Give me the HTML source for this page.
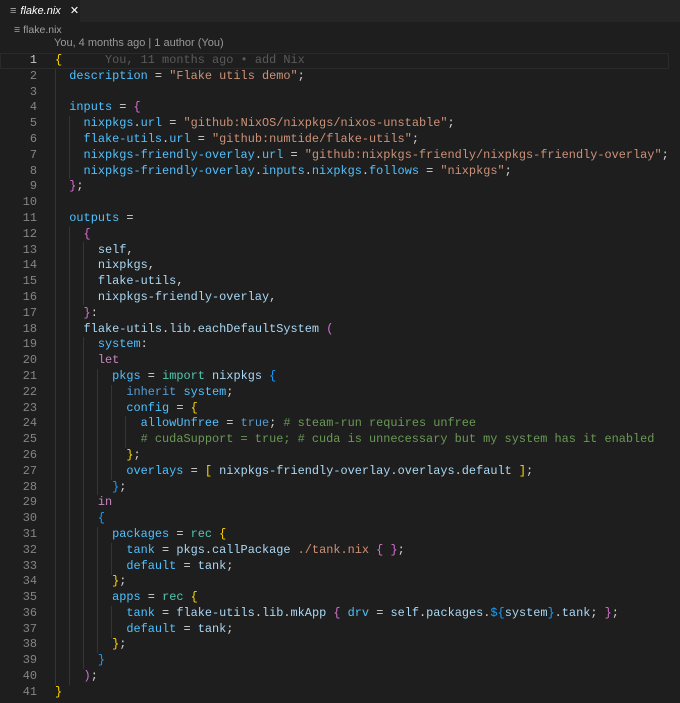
<!DOCTYPE html>
<html><head><meta charset="utf-8"><style>
body{margin:0;width:680px;height:703px;background:#1e1e1e;overflow:hidden;font-family:"Liberation Sans",sans-serif;position:relative}
.tabbar{position:absolute;left:0;top:0;width:680px;height:22px;background:#252526}
.tab{position:absolute;left:0;top:0;width:80px;height:22px;background:#1e1e1e;color:#fff;font-size:11px;font-style:italic;line-height:22px}
.bc{position:absolute;left:14px;top:23px;color:#a0a0a0;font-size:10.5px;line-height:14px}
.lens{position:absolute;left:54px;top:37px;color:#999;font-size:11px;line-height:13px}
.code{position:absolute;left:0;top:53px;font-family:"Liberation Mono",monospace;font-size:11.9px}
.l{height:15.8px;line-height:15.8px;white-space:pre;position:relative}
.n{display:inline-block;width:37px;text-align:right;color:#858585;margin-right:18px}
.cur .n{color:#c6c6c6}
.cur{outline:1px solid #2a2a2a;outline-offset:-1px}
.a{color:#4fc1ff}.v{color:#aad8f5}.s{color:#ce9178}.k{color:#4ec9b0}.t{color:#569cd6}.c{color:#6a9955}.p{color:#d4d4d4}
.b1{color:#ffd700}.b2{color:#da70d6}.b3{color:#179fff}.g{color:#5a5a5a}.kw{color:#c586c0}
.ig{position:absolute;width:1px;background:#353535}
</style></head><body>
<div class="tabbar"><div class="tab"><span style="color:#aaa;font-style:normal;margin:0 4px 0 10px">≡</span>flake.nix <span style="font-style:normal;margin-left:6px">✕</span></div></div>
<div class="bc"><span style="margin-right:3px">≡</span>flake.nix</div>
<div class="lens">You, 4 months ago | 1 author (You)</div>
<div class="ig" style="left:55px;top:69px;height:616px"></div>
<div class="ig" style="left:69px;top:116px;height:63px"></div>
<div class="ig" style="left:69px;top:227px;height:458px"></div>
<div class="ig" style="left:83px;top:242px;height:63px"></div>
<div class="ig" style="left:83px;top:337px;height:332px"></div>
<div class="ig" style="left:97px;top:369px;height:126px"></div>
<div class="ig" style="left:97px;top:527px;height:126px"></div>
<div class="ig" style="left:111px;top:385px;height:95px"></div>
<div class="ig" style="left:111px;top:543px;height:32px"></div>
<div class="ig" style="left:111px;top:606px;height:32px"></div>
<div class="ig" style="left:125px;top:416px;height:32px"></div>
<div class="code p">
<div class="l cur"><span class="n">1</span><span class="b1">{</span>      <span class="g">You, 11 months ago • add Nix</span></div>
<div class="l"><span class="n">2</span>  <span class="a">description</span> = <span class="s">"Flake utils demo"</span>;</div>
<div class="l"><span class="n">3</span></div>
<div class="l"><span class="n">4</span>  <span class="a">inputs</span> = <span class="b2">{</span></div>
<div class="l"><span class="n">5</span>    <span class="a">nixpkgs</span>.<span class="a">url</span> = <span class="s">"github:NixOS/nixpkgs/nixos-unstable"</span>;</div>
<div class="l"><span class="n">6</span>    <span class="a">flake-utils</span>.<span class="a">url</span> = <span class="s">"github:numtide/flake-utils"</span>;</div>
<div class="l"><span class="n">7</span>    <span class="a">nixpkgs-friendly-overlay</span>.<span class="a">url</span> = <span class="s">"github:nixpkgs-friendly/nixpkgs-friendly-overlay"</span>;</div>
<div class="l"><span class="n">8</span>    <span class="a">nixpkgs-friendly-overlay</span>.<span class="a">inputs</span>.<span class="a">nixpkgs</span>.<span class="a">follows</span> = <span class="s">"nixpkgs"</span>;</div>
<div class="l"><span class="n">9</span>  <span class="b2">}</span>;</div>
<div class="l"><span class="n">10</span></div>
<div class="l"><span class="n">11</span>  <span class="a">outputs</span> =</div>
<div class="l"><span class="n">12</span>    <span class="b2">{</span></div>
<div class="l"><span class="n">13</span>      <span class="v">self</span>,</div>
<div class="l"><span class="n">14</span>      <span class="v">nixpkgs</span>,</div>
<div class="l"><span class="n">15</span>      <span class="v">flake-utils</span>,</div>
<div class="l"><span class="n">16</span>      <span class="v">nixpkgs-friendly-overlay</span>,</div>
<div class="l"><span class="n">17</span>    <span class="b2">}</span>:</div>
<div class="l"><span class="n">18</span>    <span class="v">flake-utils</span>.<span class="v">lib</span>.<span class="v">eachDefaultSystem</span> <span class="b2">(</span></div>
<div class="l"><span class="n">19</span>      <span class="a">system</span>:</div>
<div class="l"><span class="n">20</span>      <span class="kw">let</span></div>
<div class="l"><span class="n">21</span>        <span class="a">pkgs</span> = <span class="k">import</span> <span class="v">nixpkgs</span> <span class="b3">{</span></div>
<div class="l"><span class="n">22</span>          <span class="t">inherit</span> <span class="a">system</span>;</div>
<div class="l"><span class="n">23</span>          <span class="a">config</span> = <span class="b1">{</span></div>
<div class="l"><span class="n">24</span>            <span class="a">allowUnfree</span> = <span class="t">true</span>; <span class="c"># steam-run requires unfree</span></div>
<div class="l"><span class="n">25</span>            <span class="c"># cudaSupport = true; # cuda is unnecessary but my system has it enabled</span></div>
<div class="l"><span class="n">26</span>          <span class="b1">}</span>;</div>
<div class="l"><span class="n">27</span>          <span class="a">overlays</span> = <span class="b1">[</span> <span class="v">nixpkgs-friendly-overlay</span>.<span class="v">overlays</span>.<span class="v">default</span> <span class="b1">]</span>;</div>
<div class="l"><span class="n">28</span>        <span class="b3">}</span>;</div>
<div class="l"><span class="n">29</span>      <span class="kw">in</span></div>
<div class="l"><span class="n">30</span>      <span class="b3">{</span></div>
<div class="l"><span class="n">31</span>        <span class="a">packages</span> = <span class="k">rec</span> <span class="b1">{</span></div>
<div class="l"><span class="n">32</span>          <span class="a">tank</span> = <span class="v">pkgs</span>.<span class="v">callPackage</span> <span class="s">./tank.nix</span> <span class="b2">{</span> <span class="b2">}</span>;</div>
<div class="l"><span class="n">33</span>          <span class="a">default</span> = <span class="v">tank</span>;</div>
<div class="l"><span class="n">34</span>        <span class="b1">}</span>;</div>
<div class="l"><span class="n">35</span>        <span class="a">apps</span> = <span class="k">rec</span> <span class="b1">{</span></div>
<div class="l"><span class="n">36</span>          <span class="a">tank</span> = <span class="v">flake-utils</span>.<span class="v">lib</span>.<span class="v">mkApp</span> <span class="b2">{</span> <span class="a">drv</span> = <span class="v">self</span>.<span class="v">packages</span>.<span class="b3">${</span><span class="v">system</span><span class="b3">}</span>.<span class="v">tank</span>; <span class="b2">}</span>;</div>
<div class="l"><span class="n">37</span>          <span class="a">default</span> = <span class="v">tank</span>;</div>
<div class="l"><span class="n">38</span>        <span class="b1">}</span>;</div>
<div class="l"><span class="n">39</span>      <span class="b3">}</span></div>
<div class="l"><span class="n">40</span>    <span class="b2">)</span>;</div>
<div class="l"><span class="n">41</span><span class="b1">}</span></div>
</div>
</body></html>
